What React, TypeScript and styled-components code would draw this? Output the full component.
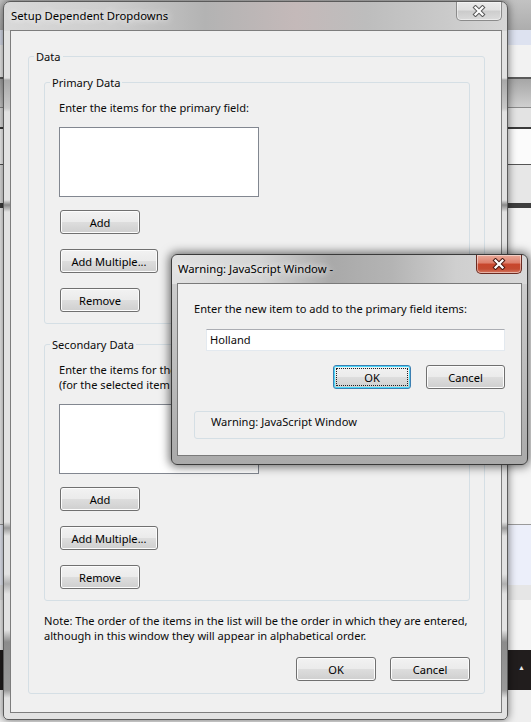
import React from 'react';
import styled, { createGlobalStyle } from 'styled-components';

const GlobalStyle = createGlobalStyle`
  html, body {
    margin: 0;
    padding: 0;
  }
  body {
    width: 531px;
    height: 722px;
    overflow: hidden;
    font-family: "Noto Sans", "Open Sans", sans-serif;
    font-size: 11.1px;
    color: #0a0a0a;
  }
  * {
    box-sizing: border-box;
  }
`;

// what shows of the application behind the dialogs
const Desktop = styled.div`
  position: relative;
  width: 531px;
  height: 722px;
  overflow: hidden;
  padding: 1px 0 0 3px;
  background: linear-gradient(
    to bottom,
    #c2c2c2 0px,
    #adadad 30px,
    #dde2f0 30px,
    #dde2f0 45px,
    #f2f2f2 45px,
    #f2f2f2 77px,
    #5a5a5a 77px,
    #5a5a5a 79px,
    #a6a6a6 79px,
    #cfcfcf 107px,
    #8a8a8a 107px,
    #8a8a8a 108px,
    #e3e3e3 108px,
    #e3e3e3 127px,
    #3a3a3a 127px,
    #3a3a3a 129px,
    #fbfbfb 129px,
    #fbfbfb 164px,
    #555 164px,
    #555 165px,
    #e7e7e7 165px,
    #e7e7e7 203px,
    #3e3e3e 203px,
    #3e3e3e 208px,
    #f4f4f4 208px,
    #f4f4f4 524px,
    #9a9a9a 524px,
    #9a9a9a 525px,
    #eceffa 525px,
    #eceffa 585px,
    #e6e6e6 585px,
    #e6e6e6 600px,
    #f4f4f4 600px,
    #f4f4f4 650px,
    #211d1d 650px,
    #211d1d 690px,
    #efefef 690px
  );
`;

const TrayArrow = styled.span`
  position: absolute;
  left: 518px;
  top: 664px;
  color: #e8e8e8;
  font-size: 7px;
  line-height: 8px;
`;

const Window = styled.div`
  width: 505px;
  height: 719px;
  border: 1px solid #5b5b5b;
  border-radius: 7px 7px 5px 5px;
  padding: 0 5px 6px 6px;
  display: flex;
  flex-direction: column;
  box-shadow: 0 0 9px rgba(0, 0, 0, 0.55);
  background:
    linear-gradient(
      90deg,
      #d9d9d9 0%,
      #cdcdcd 22%,
      #b3b3b3 40%,
      #c4b9b9 58%,
      #bdbdbd 72%,
      #cacaca 88%,
      #d6d6d6 100%
    ) top / 100% 29px no-repeat,
    linear-gradient(
      to bottom,
      #e2e2e2 0px,
      #e2e2e2 76px,
      #a9a9a9 78px,
      #c9c9c9 106px,
      #e2e2e2 110px,
      #e2e2e2 198px,
      #8a8a8a 203px,
      #e2e2e2 210px,
      #e2e2e2 520px,
      #9a9a9a 526px,
      #e2e2e2 534px,
      #e2e2e2 572px,
      #b0b0b0 582px,
      #e2e2e2 592px,
      #e2e2e2 628px,
      #8c8c8c 640px,
      #9a9a9a 688px,
      #e2e2e2 696px
    );
`;

const TitleBar = styled.div`
  height: 28px;
  display: flex;
  align-items: flex-start;
  justify-content: space-between;
  padding-left: 1px;
`;

const TitleText = styled.span`
  line-height: 28px;
  font-size: 11.3px;
  color: #000;
  white-space: nowrap;
  text-shadow: 0 0 6px rgba(255, 255, 255, 0.95), 0 0 12px rgba(255, 255, 255, 0.7);
`;

const CloseButton = styled.div<{ $red?: boolean }>`
  width: 46px;
  height: 19px;
  display: flex;
  align-items: center;
  justify-content: center;
  border: 1px solid ${(p) => (p.$red ? '#6b2b22' : '#8b8b8b')};
  border-top: none;
  border-radius: 0 0 5px 5px;
  background: ${(p) =>
    p.$red
      ? 'linear-gradient(#eaa999 0%, #dd7e6a 45%, #c8462c 50%, #c44b31 78%, #d67a63 100%)'
      : 'linear-gradient(rgba(255,255,255,0.55) 0%, rgba(240,240,240,0.5) 45%, rgba(200,200,200,0.55) 50%, rgba(225,225,225,0.6) 100%)'};
  box-shadow: inset 0 0 0 1px rgba(255, 255, 255, 0.45);
`;

const CloseGlyph = ({ outline }: { outline: string }) => (
  <svg width="14" height="12" viewBox="0 0 14 12">
    <path d="M3.5 2.5 L10.5 9.5 M10.5 2.5 L3.5 9.5" stroke={outline} strokeWidth="4.2" strokeLinecap="square" />
    <path d="M3.5 2.5 L10.5 9.5 M10.5 2.5 L3.5 9.5" stroke="#fff" strokeWidth="2.2" strokeLinecap="square" />
  </svg>
);

const Client = styled.div`
  flex: 1;
  border: 1px solid #7d7d7d;
  background: #f0f0f0;
  padding: 18px 16px 0 17px;
`;

const Group = styled.fieldset<{ $gapTop?: number }>`
  margin: ${(p) => p.$gapTop ?? 0}px 0 0 0;
  min-width: 0;
  border: 1px solid #d5dfe5;
  border-radius: 3px;
  padding: 10px 14px 11px 14px;
`;

const DataGroup = styled(Group)`
  padding: 11px 14px 12px 15px;
`;

const Legend = styled.legend<{ $shift: number }>`
  margin-left: ${(p) => p.$shift}px;
  padding: 0 2px;
  line-height: 15px;
`;

const Label = styled.div`
  line-height: 15px;
  white-space: nowrap;
`;

const ListBox = styled.div`
  width: 200px;
  height: 70px;
  margin-top: 12px;
  border: 1px solid #828790;
  background: #fff;
`;

const ButtonStack = styled.div`
  display: flex;
  flex-direction: column;
  align-items: flex-start;
  gap: 15px;
  margin-top: 13px;
  padding-left: 1px;
`;

const Button = styled.button<{ $w: number; $default?: boolean }>`
  position: relative;
  width: ${(p) => p.$w}px;
  height: 24px;
  padding: 0;
  font: inherit;
  color: #000;
  border: 1px solid ${(p) => (p.$default ? '#3c7fb1' : '#707070')};
  border-radius: 3px;
  background: linear-gradient(#f2f2f2 0%, #ebebeb 48%, #dddddd 52%, #cfcfcf 100%);
  box-shadow: inset 0 0 0 1px ${(p) => (p.$default ? '#48d8fb' : '#fcfcfc')};
  &::after {
    content: '';
    display: ${(p) => (p.$default ? 'block' : 'none')};
    position: absolute;
    inset: 2px;
    border: 1px dotted #222;
  }
`;

const Note = styled.div`
  margin-top: 12px;
  line-height: 15px;
  white-space: nowrap;
`;

const ButtonRow = styled.div<{ $gap: number; $top: number }>`
  display: flex;
  justify-content: flex-end;
  gap: ${(p) => p.$gap}px;
  margin-top: ${(p) => p.$top}px;
`;

const Dialog = styled.div`
  position: absolute;
  left: 171px;
  top: 254px;
  width: 357px;
  height: 211px;
  border: 1px solid #3a3a3a;
  border-radius: 6px;
  padding: 0 5px 8px 5px;
  display: flex;
  flex-direction: column;
  box-shadow: 0 0 10px 2px rgba(0, 0, 0, 0.55);
  background:
    linear-gradient(
      90deg,
      #e2e2e2 0%,
      #d4d4d4 25%,
      #a9a9a9 45%,
      #b4b4b4 62%,
      #cfcfcf 80%,
      #d8d8d8 100%
    ) top / 100% 29px no-repeat,
    linear-gradient(to bottom, #d2d2d2, #aaaaaa);
`;

const DialogClient = styled.div`
  flex: 1;
  border: 1px solid #7a7a7a;
  background: #f0f0f0;
  padding: 17px 16px 0 16px;
`;

const TextInput = styled.div`
  width: 299px;
  height: 22px;
  margin: 13px 0 0 12px;
  padding-left: 3px;
  line-height: 19px;
  background: #fff;
  border: 1px solid #e3e9ef;
  border-top-color: #abadb3;
`;

const StatusBox = styled.div`
  height: 28px;
  margin-top: 22px;
  padding-left: 16px;
  line-height: 20px;
  border: 1px solid #d5dfe5;
  border-radius: 3px;
`;

const ItemSection = ({ lines }: { lines: string[] }) => (
  <>
    {lines.map((l) => (
      <Label key={l}>{l}</Label>
    ))}
    <ListBox />
    <ButtonStack>
      <Button $w={80}>Add</Button>
      <Button $w={98}>Add Multiple...</Button>
      <Button $w={80}>Remove</Button>
    </ButtonStack>
  </>
);

export default function App() {
  return (
    <>
      <GlobalStyle />
      <Desktop>
        <TrayArrow>▲</TrayArrow>
        <Window>
          <TitleBar>
            <TitleText>Setup Dependent Dropdowns</TitleText>
            <CloseButton>
              <CloseGlyph outline="#5a5a5a" />
            </CloseButton>
          </TitleBar>
          <Client>
            <DataGroup>
              <Legend $shift={-10}>Data</Legend>
              <Group>
                <Legend $shift={-9}>Primary Data</Legend>
                <ItemSection lines={['Enter the items for the primary field:']} />
              </Group>
              <Group $gapTop={13}>
                <Legend $shift={-9}>Secondary Data</Legend>
                <ItemSection
                  lines={[
                    'Enter the items for the secondary field',
                    '(for the selected item in the primary field):',
                  ]}
                />
              </Group>
              <Note>
                Note: The order of the items in the list will be the order in which they are entered,
                <br />
                although in this window they will appear in alphabetical order.
              </Note>
              <ButtonRow $gap={14} $top={14}>
                <Button $w={80}>OK</Button>
                <Button $w={80}>Cancel</Button>
              </ButtonRow>
            </DataGroup>
          </Client>
        </Window>

        <Dialog>
          <TitleBar>
            <TitleText>Warning: JavaScript Window -</TitleText>
            <CloseButton $red>
              <CloseGlyph outline="#4b1a12" />
            </CloseButton>
          </TitleBar>
          <DialogClient>
            <Label>Enter the new item to add to the primary field items:</Label>
            <TextInput>Holland</TextInput>
            <ButtonRow $gap={15} $top={14}>
              <Button $w={78} $default>
                OK
              </Button>
              <Button $w={79}>Cancel</Button>
            </ButtonRow>
            <StatusBox>Warning: JavaScript Window</StatusBox>
          </DialogClient>
        </Dialog>
      </Desktop>
    </>
  );
}
